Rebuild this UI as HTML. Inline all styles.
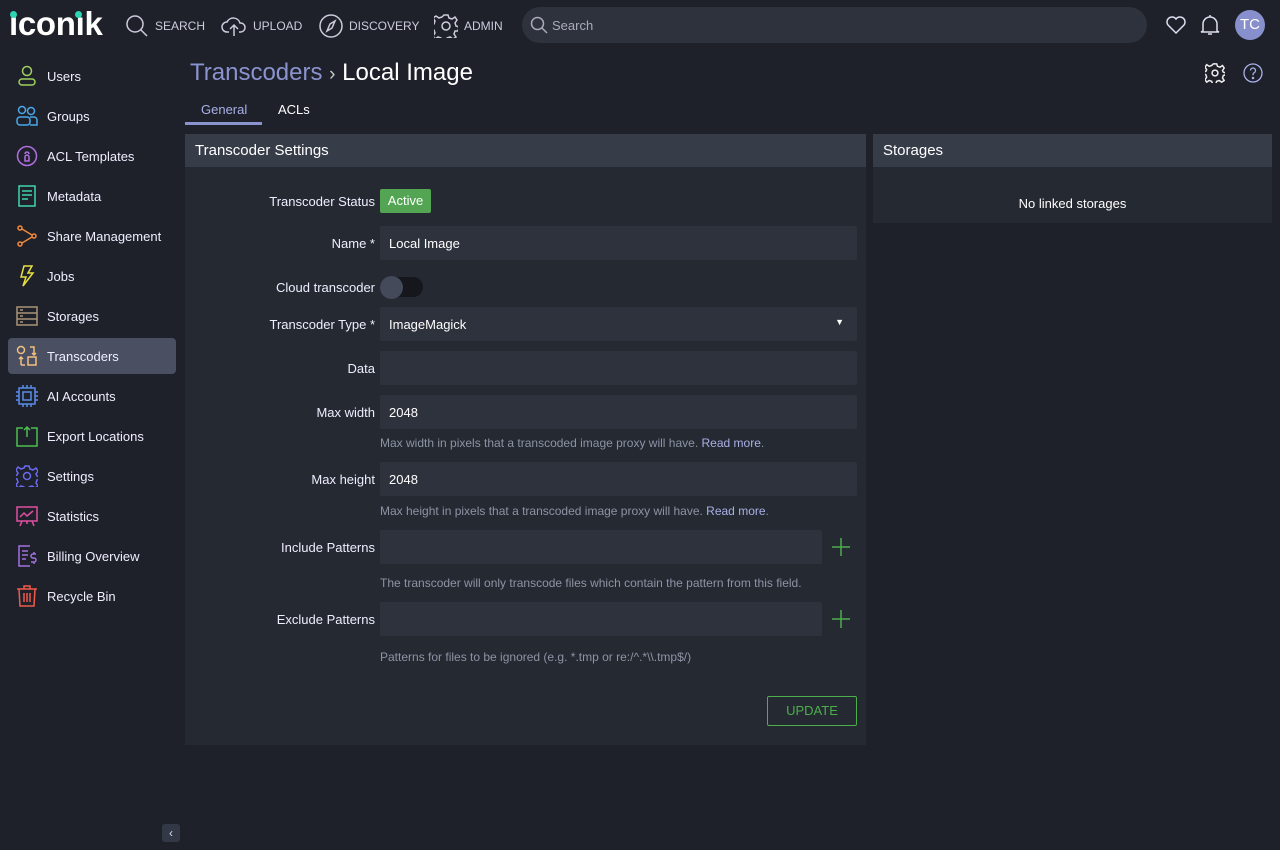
<!DOCTYPE html>
<html><head><meta charset="utf-8"><style>
*{box-sizing:border-box;margin:0;padding:0}
body{width:1280px;height:850px;background:#1e212a;font-family:"Liberation Sans",sans-serif;color:#fff;position:relative;overflow:hidden;font-size:13px}
.abs{position:absolute}
.nav{position:absolute;top:17px;color:#ccd;font-size:12px;display:flex;align-items:center;gap:6px}
.side{position:absolute;left:8px;width:168px;height:36px;border-radius:4px;display:flex;align-items:center;font-size:13px;color:#eef}
.side svg{position:absolute;left:8px;top:7px}
.side span{position:absolute;left:39px}
.lbl{position:absolute;right:905px;font-size:13px;color:#eef;text-align:right}
.inp{position:absolute;left:380px;width:477px;height:34px;background:#2e323c;border-radius:2px;font-size:13px;color:#fff;padding:10px 9px}
.help{position:absolute;left:380px;font-size:12px;color:#8d93a5}
.help b{font-weight:normal;color:#a9b0e6}
.plus{position:absolute;left:831px;width:20px;height:20px}
</style></head><body>
<!-- top bar -->
<div class="abs" style="left:9px;top:5px;font-size:33px;font-weight:bold;letter-spacing:-0.3px;color:#fff">&#305;con&#305;k</div>
<div class="abs" style="left:10px;top:11px;width:7px;height:7px;border-radius:4px;background:#2cd4b4"></div>
<div class="abs" style="left:75px;top:11px;width:7px;height:7px;border-radius:4px;background:#2cd4b4"></div>
<div class="nav" style="left:125px;top:14px"><svg width="24" height="24" viewBox="0 0 24 24" fill="none" stroke="#ccd" stroke-width="1.5"><circle cx="10" cy="10" r="8"/><path d="M16 16l6 6"/></svg>SEARCH</div>
<div class="nav" style="left:221px;top:14px"><svg width="26" height="24" viewBox="0 0 26 24" fill="none" stroke="#ccd" stroke-width="1.5"><path d="M8 18H6a5 5 0 0 1 0-10 7 7 0 0 1 13 1 4.5 4.5 0 0 1 1 9h-2M13 22v-10M9 15l4-4 4 4"/></svg>UPLOAD</div>
<div class="nav" style="left:319px;top:14px"><svg width="24" height="24" viewBox="0 0 24 24" fill="none" stroke="#ccd" stroke-width="1.5"><circle cx="12" cy="12" r="11"/><path d="M16 7l-3 7-5 3 3-7z"/></svg>DISCOVERY</div>
<div class="nav" style="left:434px;top:14px"><svg width="24" height="24" viewBox="0 0 24 24" fill="none" stroke="#ccd" stroke-width="1.5"><circle cx="12" cy="12" r="4"/><path d="M10 1h4l1 3 3 1 3-2 2 3-2 3 1 3 3 1v0l-1 4-3 0-1 3 2 3-3 2-3-2-3 1-1 3h-4l-1-3-3-1-3 2-2-3 2-3-1-3-3-1v-4l3-1 1-3-2-3 3-2 3 2 3-1z"/></svg>ADMIN</div>
<div class="abs" style="left:522px;top:7px;width:625px;height:36px;border-radius:18px;background:#2e323c"></div>
<svg class="abs" style="left:530px;top:16px" width="18" height="18" viewBox="0 0 18 18" fill="none" stroke="#aab" stroke-width="1.5"><circle cx="7.5" cy="7.5" r="6"/><path d="M12 12l5 5"/></svg>
<div class="abs" style="left:552px;top:18px;color:#aab;font-size:13px">Search</div>
<svg class="abs" style="left:1166px;top:16px" width="20" height="18" viewBox="0 0 20 18" fill="none" stroke="#dde" stroke-width="1.5"><path d="M10 17L2 9a4.5 4.5 0 0 1 8-6 4.5 4.5 0 0 1 8 6z"/></svg>
<svg class="abs" style="left:1200px;top:14px" width="20" height="22" viewBox="0 0 20 22" fill="none" stroke="#dde" stroke-width="1.5"><path d="M3 17V10a7 7 0 0 1 14 0v7l2 1H1zM8 20h4M10 1v2"/></svg>
<div class="abs" style="left:1235px;top:10px;width:30px;height:30px;border-radius:15px;background:#8790cc;color:#fff;font-size:15px;text-align:center;line-height:30px">TC</div>
<!-- sidebar -->
<div class="side" style="top:58px"><svg width="22" height="22" viewBox="0 0 22 22" fill="none" stroke="#9ecf60" stroke-width="1.5"><circle cx="11" cy="6" r="4.5"/><rect x="3" y="14" width="16" height="6" rx="3"/></svg><span>Users</span></div>
<div class="side" style="top:98px"><svg width="22" height="22" viewBox="0 0 22 22" fill="none" stroke="#4aa8e8" stroke-width="1.5"><circle cx="6" cy="5" r="3.5"/><circle cx="15" cy="6" r="3.5"/><rect x="1" y="12" width="13" height="8" rx="3"/><path d="M14 12h4a3 3 0 0 1 3 3v5h-7"/></svg><span>Groups</span></div>
<div class="side" style="top:138px"><svg width="22" height="22" viewBox="0 0 22 22" fill="none" stroke="#b070e0" stroke-width="1.5"><circle cx="11" cy="11" r="9.5"/><path d="M9 16v-4a2 2 0 1 1 4 0v4zM9 9a2 2 0 1 1 4 0"/></svg><span>ACL Templates</span></div>
<div class="side" style="top:178px"><svg width="22" height="22" viewBox="0 0 22 22" fill="none" stroke="#3ed6b0" stroke-width="1.5"><rect x="3" y="1" width="16" height="20"/><path d="M6 6h10M6 10h10M6 14h6"/></svg><span>Metadata</span></div>
<div class="side" style="top:218px"><svg width="22" height="22" viewBox="0 0 22 22" fill="none" stroke="#f08a3a" stroke-width="1.5"><circle cx="4" cy="3" r="2"/><circle cx="4" cy="19" r="2"/><circle cx="18" cy="11" r="2"/><path d="M6 4l10 6M6 18l10-6"/></svg><span>Share Management</span></div>
<div class="side" style="top:258px"><svg width="22" height="22" viewBox="0 0 22 22" fill="none" stroke="#e8e040" stroke-width="1.5"><path d="M8 1h8l-4 7h5L7 21l3-9H5z"/></svg><span>Jobs</span></div>
<div class="side" style="top:298px"><svg width="22" height="22" viewBox="0 0 22 22" fill="none" stroke="#a89378" stroke-width="1.5"><rect x="1" y="2" width="20" height="18"/><path d="M1 8h20M1 14h20M4 5h3M4 11h3M4 17h3"/></svg><span>Storages</span></div>
<div class="side" style="top:338px;background:#4a5061"><svg width="22" height="22" viewBox="0 0 22 22" fill="none" stroke="#f0c080" stroke-width="1.5"><circle cx="5" cy="5" r="3.5"/><rect x="12" y="12" width="8" height="8"/><path d="M14 2h4v8M16 8l2 2 2-2M5 20v-8M3 14l2-2 2 2M5 20h4"/></svg><span>Transcoders</span></div>
<div class="side" style="top:378px"><svg width="22" height="22" viewBox="0 0 22 22" fill="none" stroke="#5a8ee8" stroke-width="1.5"><rect x="3" y="3" width="16" height="16"/><rect x="7" y="7" width="8" height="8"/><path d="M7 0v3M11 0v3M15 0v3M7 19v3M11 19v3M15 19v3M0 7h3M0 11h3M0 15h3M19 7h3M19 11h3M19 15h3"/></svg><span>AI Accounts</span></div>
<div class="side" style="top:418px"><svg width="22" height="22" viewBox="0 0 22 22" fill="none" stroke="#4cc050" stroke-width="1.5"><path d="M7 3H1v18h20V3h-6M11 12V2M8 5l3-3 3 3"/></svg><span>Export Locations</span></div>
<div class="side" style="top:458px"><svg width="22" height="22" viewBox="0 0 22 22" fill="none" stroke="#6a6af0" stroke-width="1.5"><circle cx="11" cy="11" r="3.5"/><path d="M9 1h4l1 3 3 1 3-2 2 3-2 3 1 2 3 1v2l-3 1-1 3 2 3-3 2-3-2-3 1-1 3H9l-1-3-3-1-3 2-2-3 2-3-1-3-3-1v-2l3-1 1-2-2-3 2-3 3 2 3-1z"/></svg><span>Settings</span></div>
<div class="side" style="top:498px"><svg width="22" height="22" viewBox="0 0 22 22" fill="none" stroke="#e050a0" stroke-width="1.5"><rect x="1" y="2" width="20" height="14"/><path d="M4 12l4-4 3 3 6-5M6 16l-2 5M16 16l2 5M11 16v3"/></svg><span>Statistics</span></div>
<div class="side" style="top:538px"><svg width="22" height="22" viewBox="0 0 22 22" fill="none" stroke="#a070e0" stroke-width="1.5"><path d="M14 1H3v20h11M6 6h6M6 10h6M6 14h4M20 9h-3a1.5 1.5 0 0 0 0 4h1a1.5 1.5 0 0 1 0 4h-3M18 7v2M18 17v2"/></svg><span>Billing Overview</span></div>
<div class="side" style="top:578px"><svg width="22" height="22" viewBox="0 0 22 22" fill="none" stroke="#f05a4a" stroke-width="1.5"><path d="M1 4h20M8 4V1h6v3M3 4l1 17h14l1-17M8 8v9M11 8v9M14 8v9"/></svg><span>Recycle Bin</span></div>
<div class="abs" style="left:162px;top:824px;width:18px;height:18px;border-radius:3px;background:#333846;color:#dde;font-size:12px;text-align:center;line-height:18px">&#8249;</div>
<!-- title -->
<div class="abs" style="left:190px;top:59px;font-size:24px;color:#8b93cf">Transcoders <span style="color:#ccc;font-size:19px">&#8250;</span> <span style="color:#fff">Local Image</span></div>
<svg class="abs" style="left:1205px;top:63px" width="20" height="20" viewBox="0 0 24 24" fill="none" stroke="#eee" stroke-width="1.8"><circle cx="12" cy="12" r="3.5"/><path d="M10 1h4l1 3 3 1 3-2 2 3-2 3 1 2 3 1v2l-3 1-1 3 2 3-3 2-3-2-3 1-1 3h-4l-1-3-3-1-3 2-2-3 2-3-1-3-3-1v-2l3-1 1-2-2-3 2-3 3 2 3-1z"/></svg>
<svg class="abs" style="left:1243px;top:63px" width="20" height="20" viewBox="0 0 20 20" fill="none" stroke="#a9b0e6" stroke-width="1.3"><circle cx="10" cy="10" r="9"/><path d="M7.5 7.5a2.5 2.5 0 1 1 3.5 2.3c-.7.4-1 1-1 1.7v.8"/><circle cx="10" cy="15" r=".6" fill="#a9b0e6"/></svg>
<div class="abs" style="left:201px;top:102px;font-size:13px;color:#a9b0e6">General</div>
<div class="abs" style="left:185px;top:122px;width:77px;height:3px;background:#8b93cf"></div>
<div class="abs" style="left:278px;top:102px;font-size:13px;color:#fff">ACLs</div>
<!-- left panel -->
<div class="abs" style="left:185px;top:134px;width:681px;height:611px;background:#252932"></div>
<div class="abs" style="left:185px;top:134px;width:681px;height:33px;background:#373c49;padding:8px 10px;font-size:15px">Transcoder Settings</div>
<div class="lbl" style="top:194px">Transcoder Status</div>
<div class="abs" style="left:380px;top:189px;width:51px;height:24px;background:#53a553;border-radius:2px;font-size:13px;text-align:center;line-height:24px">Active</div>
<div class="lbl" style="top:236px">Name *</div><div class="inp" style="top:226px">Local Image</div>
<div class="lbl" style="top:280px">Cloud transcoder</div>
<div class="abs" style="left:380px;top:277px;width:43px;height:20px;border-radius:10px;background:#15171c"></div>
<div class="abs" style="left:380px;top:276px;width:23px;height:23px;border-radius:12px;background:#444a5a"></div>
<div class="lbl" style="top:317px">Transcoder Type *</div><div class="inp" style="top:307px">ImageMagick<span style="position:absolute;right:13px;top:10px;font-size:9px">&#9660;</span></div>
<div class="lbl" style="top:361px">Data</div><div class="inp" style="top:351px"></div>
<div class="lbl" style="top:405px">Max width</div><div class="inp" style="top:395px">2048</div>
<div class="help" style="top:436px">Max width in pixels that a transcoded image proxy will have. <b>Read more</b>.</div>
<div class="lbl" style="top:472px">Max height</div><div class="inp" style="top:462px">2048</div>
<div class="help" style="top:504px">Max height in pixels that a transcoded image proxy will have. <b>Read more</b>.</div>
<div class="lbl" style="top:540px">Include Patterns</div><div class="inp" style="top:530px;width:442px"></div>
<svg class="plus" style="top:537px" viewBox="0 0 20 20" stroke="#4cae4c" stroke-width="1.5"><path d="M10 1v18M1 10h18"/></svg>
<div class="help" style="top:576px">The transcoder will only transcode files which contain the pattern from this field.</div>
<div class="lbl" style="top:612px">Exclude Patterns</div><div class="inp" style="top:602px;width:442px"></div>
<svg class="plus" style="top:609px" viewBox="0 0 20 20" stroke="#4cae4c" stroke-width="1.5"><path d="M10 1v18M1 10h18"/></svg>
<div class="help" style="top:650px">Patterns for files to be ignored (e.g. *.tmp or re:/^.*\\.tmp$/)</div>
<div class="abs" style="left:767px;top:696px;width:90px;height:30px;border:1px solid #4cae4c;border-radius:2px;color:#4cae4c;font-size:13px;text-align:center;line-height:28px">UPDATE</div>
<!-- right panel -->
<div class="abs" style="left:873px;top:134px;width:399px;height:89px;background:#252932"></div>
<div class="abs" style="left:873px;top:134px;width:399px;height:33px;background:#373c49;padding:8px 10px;font-size:15px">Storages</div>
<div class="abs" style="left:873px;top:196px;width:399px;text-align:center;font-size:13px">No linked storages</div>
</body></html>
